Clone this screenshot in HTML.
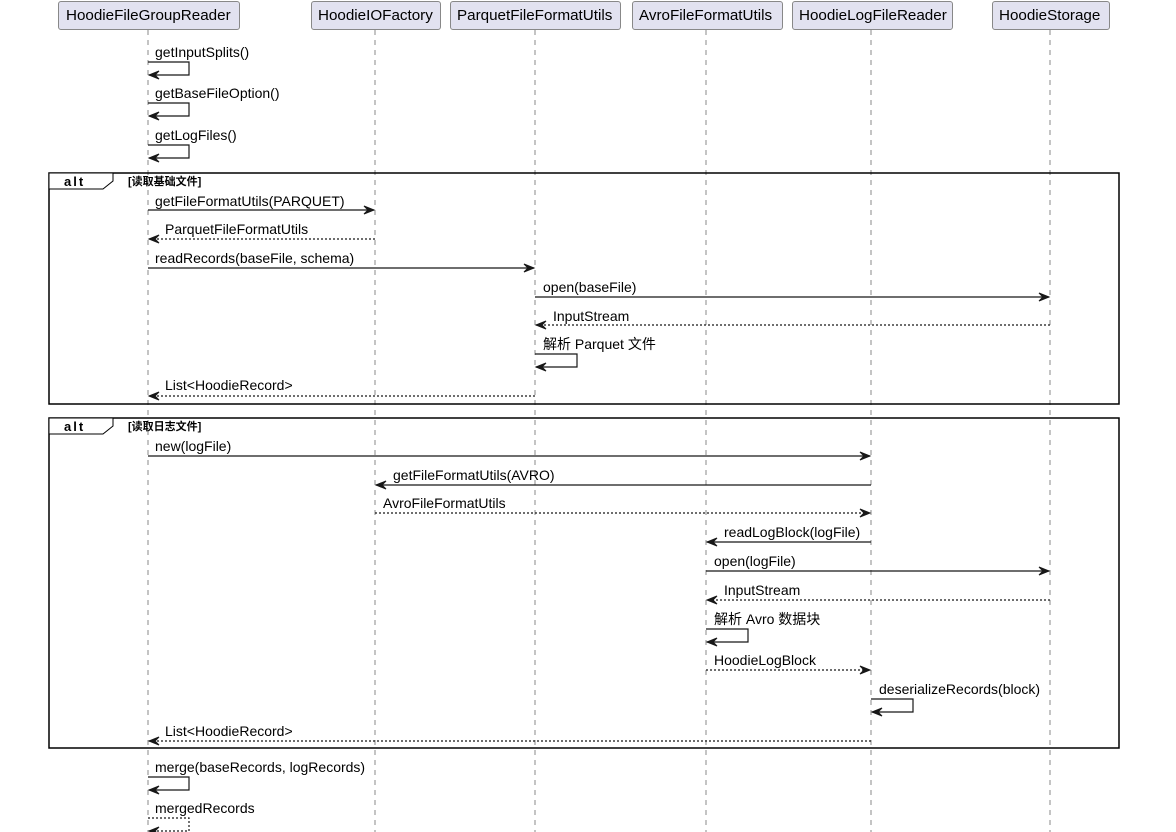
<!DOCTYPE html>
<html><head><meta charset="utf-8"><style>
html,body{margin:0;padding:0;background:#fff;}
svg{display:block;}
text{font-family:"Liberation Sans","Noto Sans CJK SC",sans-serif;font-size:14px;fill:#000;}
.p{font-size:15.2px;}
.ll{stroke:#888;stroke-width:1;stroke-dasharray:5,5;}
.m{stroke:#181818;stroke-width:1.2;fill:none;}
.d{stroke:#181818;stroke-width:1.2;fill:none;stroke-dasharray:2,2;}
.h{fill:#181818;stroke:#181818;}
.box{fill:#E2E2F0;stroke:#888;stroke-width:1;}
.fr{fill:none;stroke:#000;stroke-width:1.5;}
.lab{font-size:11px;font-weight:bold;}
</style></head><body>
<svg width="1176" height="832" viewBox="0 0 1176 832" xmlns="http://www.w3.org/2000/svg">
<line class="ll" x1="148" y1="30" x2="148" y2="832"/>
<line class="ll" x1="375" y1="30" x2="375" y2="832"/>
<line class="ll" x1="535" y1="30" x2="535" y2="832"/>
<line class="ll" x1="706" y1="30" x2="706" y2="832"/>
<line class="ll" x1="871" y1="30" x2="871" y2="832"/>
<line class="ll" x1="1050" y1="30" x2="1050" y2="832"/>
<rect class="box" x="58.5" y="1.5" width="181" height="28" rx="2.5"/><text class="p" x="66" y="20">HoodieFileGroupReader</text>
<rect class="box" x="311.5" y="1.5" width="129" height="28" rx="2.5"/><text class="p" x="318" y="20">HoodieIOFactory</text>
<rect class="box" x="450.5" y="1.5" width="170" height="28" rx="2.5"/><text class="p" x="457" y="20">ParquetFileFormatUtils</text>
<rect class="box" x="632.5" y="1.5" width="150" height="28" rx="2.5"/><text class="p" x="639" y="20">AvroFileFormatUtils</text>
<rect class="box" x="792.5" y="1.5" width="160" height="28" rx="2.5"/><text class="p" x="799" y="20">HoodieLogFileReader</text>
<rect class="box" x="992.5" y="1.5" width="117" height="28" rx="2.5"/><text class="p" x="999" y="20">HoodieStorage</text>

<text x="155" y="57">getInputSplits()</text>
<polyline class="m" points="148,62 189,62 189,75 149,75"/>
<polygon class="h" points="159,71 149,75 159,79 155,75"/>
<text x="155" y="98">getBaseFileOption()</text>
<polyline class="m" points="148,103 189,103 189,116 149,116"/>
<polygon class="h" points="159,112 149,116 159,120 155,116"/>
<text x="155" y="140">getLogFiles()</text>
<polyline class="m" points="148,145 189,145 189,158 149,158"/>
<polygon class="h" points="159,154 149,158 159,162 155,158"/>

<rect class="fr" x="49" y="173" width="1070" height="231"/>
<path d="M49,173 L113,173 L113,181 L103,189 L49,189 Z" fill="#fff" stroke="#000" stroke-width="1"/>
<text x="64" y="186" style="font-size:13px;font-weight:bold;letter-spacing:2px">alt</text>
<text class="lab" x="128" y="185">[读取基础文件]</text>

<text x="155" y="206">getFileFormatUtils(PARQUET)</text>
<line class="m" x1="148" y1="210" x2="374" y2="210"/>
<polygon class="h" points="364,206 374,210 364,214 368,210"/>

<text x="165" y="234">ParquetFileFormatUtils</text>
<line class="d" x1="375" y1="239" x2="149" y2="239"/>
<polygon class="h" points="159,235 149,239 159,243 155,239"/>

<text x="155" y="263">readRecords(baseFile, schema)</text>
<line class="m" x1="148" y1="268" x2="534" y2="268"/>
<polygon class="h" points="524,264 534,268 524,272 528,268"/>

<text x="543" y="292">open(baseFile)</text>
<line class="m" x1="535" y1="297" x2="1049" y2="297"/>
<polygon class="h" points="1039,293 1049,297 1039,301 1043,297"/>

<text x="553" y="321">InputStream</text>
<line class="d" x1="1050" y1="325" x2="536" y2="325"/>
<polygon class="h" points="546,321 536,325 546,329 542,325"/>

<text x="543" y="349">解析 Parquet 文件</text>
<polyline class="m" points="535,354 577,354 577,367 536,367"/>
<polygon class="h" points="546,363 536,367 546,371 542,367"/>

<text x="165" y="390">List&lt;HoodieRecord&gt;</text>
<line class="d" x1="535" y1="396" x2="149" y2="396"/>
<polygon class="h" points="159,392 149,396 159,400 155,396"/>

<rect class="fr" x="49" y="418" width="1070" height="330"/>
<path d="M49,418 L113,418 L113,426 L103,434 L49,434 Z" fill="#fff" stroke="#000" stroke-width="1"/>
<text x="64" y="431" style="font-size:13px;font-weight:bold;letter-spacing:2px">alt</text>
<text class="lab" x="128" y="430">[读取日志文件]</text>

<text x="155" y="451">new(logFile)</text>
<line class="m" x1="148" y1="456" x2="870" y2="456"/>
<polygon class="h" points="860,452 870,456 860,460 864,456"/>

<text x="393" y="480">getFileFormatUtils(AVRO)</text>
<line class="m" x1="871" y1="485" x2="376" y2="485"/>
<polygon class="h" points="386,481 376,485 386,489 382,485"/>

<text x="383" y="508">AvroFileFormatUtils</text>
<line class="d" x1="375" y1="513" x2="870" y2="513"/>
<polygon class="h" points="860,509 870,513 860,517 864,513"/>

<text x="724" y="537">readLogBlock(logFile)</text>
<line class="m" x1="871" y1="542" x2="707" y2="542"/>
<polygon class="h" points="717,538 707,542 717,546 713,542"/>

<text x="714" y="566">open(logFile)</text>
<line class="m" x1="706" y1="571" x2="1049" y2="571"/>
<polygon class="h" points="1039,567 1049,571 1039,575 1043,571"/>

<text x="724" y="595">InputStream</text>
<line class="d" x1="1050" y1="600" x2="707" y2="600"/>
<polygon class="h" points="717,596 707,600 717,604 713,600"/>

<text x="714" y="624">解析 Avro 数据块</text>
<polyline class="m" points="706,629 748,629 748,642 707,642"/>
<polygon class="h" points="717,638 707,642 717,646 713,642"/>

<text x="714" y="665">HoodieLogBlock</text>
<line class="d" x1="706" y1="670" x2="870" y2="670"/>
<polygon class="h" points="860,666 870,670 860,674 864,670"/>

<text x="879" y="694">deserializeRecords(block)</text>
<polyline class="m" points="871,699 913,699 913,712 872,712"/>
<polygon class="h" points="882,708 872,712 882,716 878,712"/>

<text x="165" y="736">List&lt;HoodieRecord&gt;</text>
<line class="d" x1="871" y1="741" x2="149" y2="741"/>
<polygon class="h" points="159,737 149,741 159,745 155,741"/>

<text x="155" y="772">merge(baseRecords, logRecords)</text>
<polyline class="m" points="148,777 189,777 189,790 149,790"/>
<polygon class="h" points="159,786 149,790 159,794 155,790"/>

<text x="155" y="813">mergedRecords</text>
<polyline class="d" points="148,818 189,818 189,831 149,831"/>
<polygon class="h" points="159,827 149,831 159,835 155,831"/>
</svg>
</body></html>
